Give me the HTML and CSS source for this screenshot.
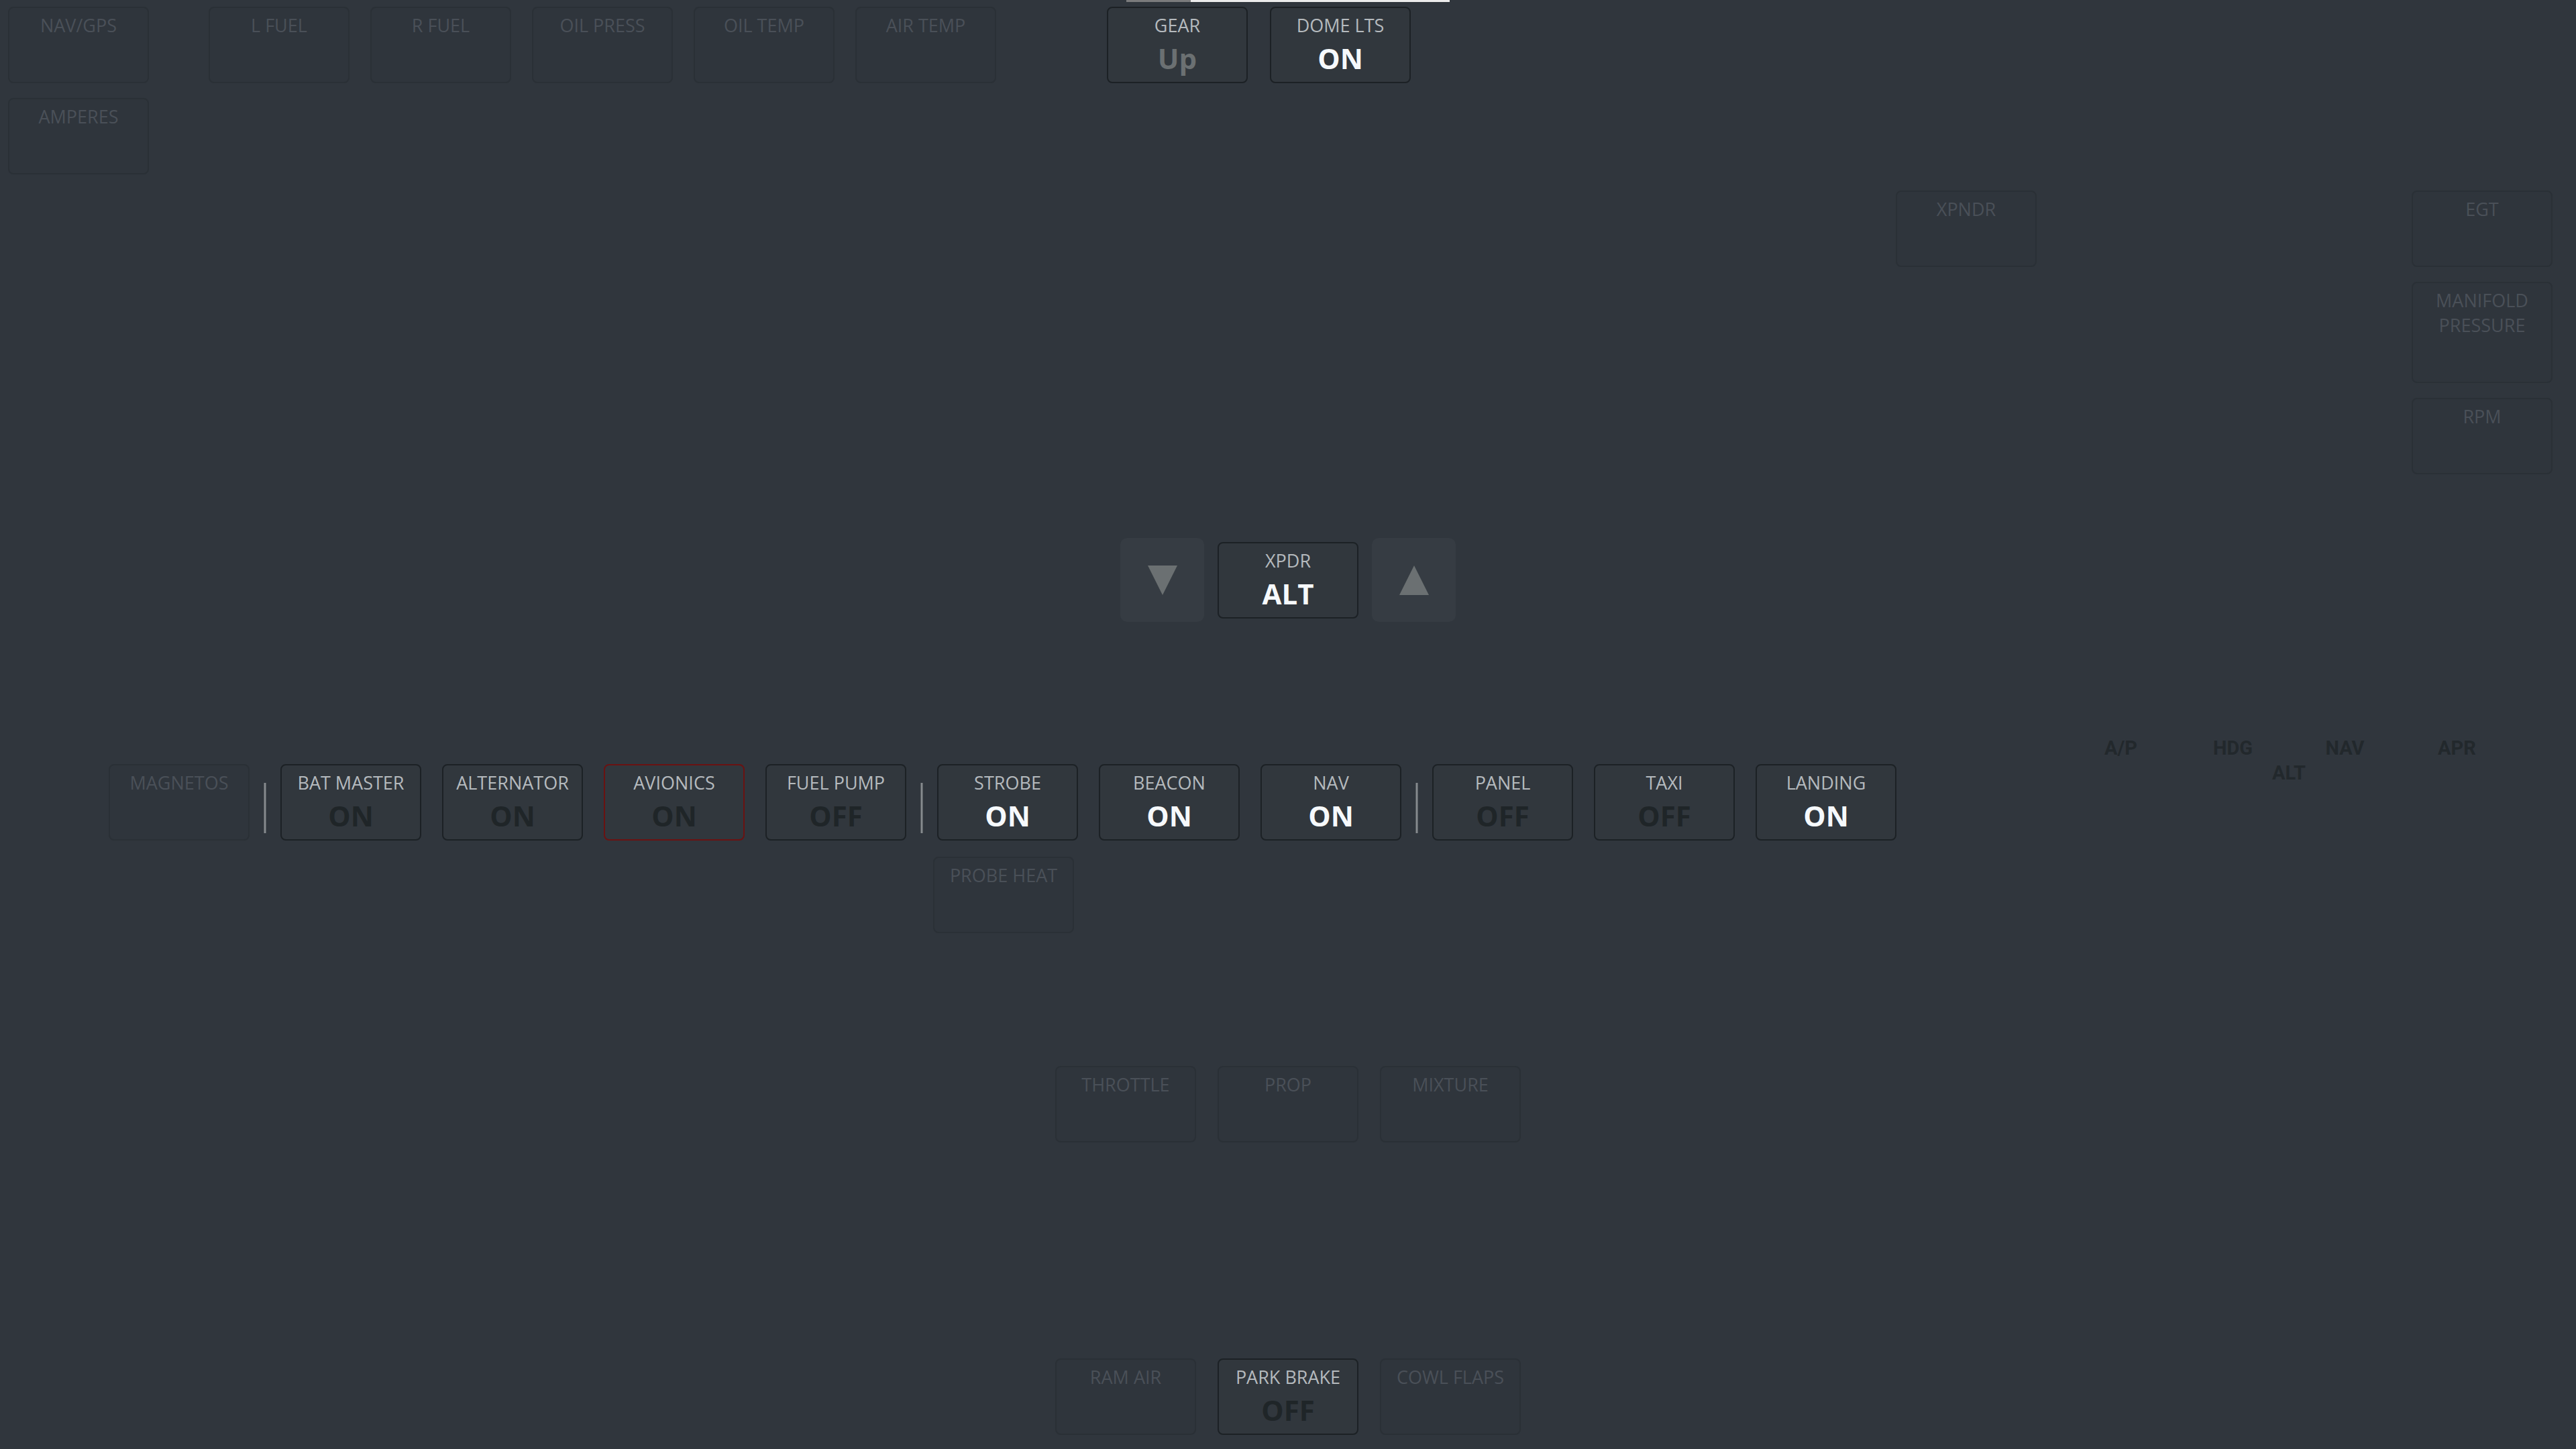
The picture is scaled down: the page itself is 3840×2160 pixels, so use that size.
FILE: index.html
```html
<!DOCTYPE html>
<html lang="en">
<head>
<meta charset="utf-8">
<title>Cockpit Panel</title>
<link rel="stylesheet" href="styles.css">
</head>
<body>
<main class="canvas">
  <div class="topbar"><span class="topbar-fill"></span></div>

  <section class="group g-left-col">
    <div class="btn faded"><span class="lbl">NAV/GPS</span><span class="val">&nbsp;</span></div>
    <div class="btn faded"><span class="lbl">AMPERES</span><span class="val">&nbsp;</span></div>
  </section>

  <section class="group g-gauges">
    <div class="btn faded"><span class="lbl">L FUEL</span><span class="val">&nbsp;</span></div>
    <div class="btn faded"><span class="lbl">R FUEL</span><span class="val">&nbsp;</span></div>
    <div class="btn faded"><span class="lbl">OIL PRESS</span><span class="val">&nbsp;</span></div>
    <div class="btn faded"><span class="lbl">OIL TEMP</span><span class="val">&nbsp;</span></div>
    <div class="btn faded"><span class="lbl">AIR TEMP</span><span class="val">&nbsp;</span></div>
  </section>

  <section class="group g-gear">
    <div class="btn"><span class="lbl">GEAR</span><span class="val gray">Up</span></div>
    <div class="btn"><span class="lbl">DOME LTS</span><span class="val on">ON</span></div>
  </section>

  <section class="group g-xpndr">
    <div class="btn faded"><span class="lbl">XPNDR</span><span class="val">&nbsp;</span></div>
  </section>

  <section class="group g-engine">
    <div class="btn faded"><span class="lbl">EGT</span><span class="val">&nbsp;</span></div>
    <div class="btn faded"><span class="lbl">MANIFOLD<br>PRESSURE</span><span class="val">&nbsp;</span></div>
    <div class="btn faded"><span class="lbl">RPM</span><span class="val">&nbsp;</span></div>
  </section>

  <section class="group g-xpdr">
    <div class="arrow"><svg width="44" height="44" viewBox="0 0 44 44"><polygon points="0,0 44,0 22,44" fill="#6b7072"/></svg></div>
    <div class="btn"><span class="lbl">XPDR</span><span class="val on">ALT</span></div>
    <div class="arrow"><svg width="44" height="44" viewBox="0 0 44 44"><polygon points="22,0 44,44 0,44" fill="#6b7072"/></svg></div>
  </section>

  <section class="group g-switches">
    <div class="btn faded"><span class="lbl">MAGNETOS</span><span class="val">&nbsp;</span></div>
    <span class="sep"></span>
    <div class="btn"><span class="lbl">BAT MASTER</span><span class="val dim">ON</span></div>
    <div class="btn"><span class="lbl">ALTERNATOR</span><span class="val dim">ON</span></div>
    <div class="btn alert"><span class="lbl">AVIONICS</span><span class="val dim">ON</span></div>
    <div class="btn"><span class="lbl">FUEL PUMP</span><span class="val dim">OFF</span></div>
    <span class="sep"></span>
    <div class="btn"><span class="lbl">STROBE</span><span class="val on">ON</span></div>
    <div class="btn"><span class="lbl">BEACON</span><span class="val on">ON</span></div>
    <div class="btn"><span class="lbl">NAV</span><span class="val on">ON</span></div>
    <span class="sep"></span>
    <div class="btn"><span class="lbl">PANEL</span><span class="val dim">OFF</span></div>
    <div class="btn"><span class="lbl">TAXI</span><span class="val dim">OFF</span></div>
    <div class="btn"><span class="lbl">LANDING</span><span class="val on">ON</span></div>
  </section>

  <section class="group g-probe">
    <div class="btn faded"><span class="lbl">PROBE HEAT</span><span class="val">&nbsp;</span></div>
  </section>

  <section class="group g-ap">
    <span class="ap">A/P</span>
    <span class="ap">HDG</span>
    <span class="ap">NAV</span>
    <span class="ap">APR</span>
    <span class="ap ap-alt">ALT</span>
  </section>

  <section class="group g-engine-ctl">
    <div class="btn faded"><span class="lbl">THROTTLE</span><span class="val">&nbsp;</span></div>
    <div class="btn faded"><span class="lbl">PROP</span><span class="val">&nbsp;</span></div>
    <div class="btn faded"><span class="lbl">MIXTURE</span><span class="val">&nbsp;</span></div>
  </section>

  <section class="group g-bottom">
    <div class="btn faded"><span class="lbl">RAM AIR</span><span class="val">&nbsp;</span></div>
    <div class="btn"><span class="lbl">PARK BRAKE</span><span class="val dim">OFF</span></div>
    <div class="btn faded"><span class="lbl">COWL FLAPS</span><span class="val">&nbsp;</span></div>
  </section>
</main>
</body>
</html>
```

FILE: styles.css
```css
* { box-sizing: border-box; }

html, body {
  margin: 0;
  padding: 0;
  background: #30363d;
}

body {
  font-family: "Open Sans", "Noto Sans", sans-serif;
  color: #b5babe;
}

.canvas {
  position: relative;
  width: 3840px;
  height: 2160px;
  overflow: hidden;
  background: #30363d;
}

.topbar {
  position: absolute;
  left: 1679px;
  top: 0;
  width: 482px;
  height: 3px;
  background: #ececec;
  display: flex;
}

.topbar-fill {
  width: 96px;
  height: 100%;
  background: #7a7b7c;
}

.group {
  position: absolute;
  display: flex;
}

.btn {
  width: 210px;
  flex: none;
  border: 2px solid #1c2125;
  border-radius: 8px;
  background: #31373d;
  padding: 7px 4px 7px;
  display: flex;
  flex-direction: column;
  align-items: center;
  text-align: center;
}

.lbl {
  font-size: 27px;
  line-height: 37px;
  color: #b5babe;
  white-space: nowrap;
}

.val {
  margin-top: 2px;
  font-size: 42px;
  line-height: 57px;
  font-weight: 700;
  color: #f5f9fc;
}

.val.on { color: #f6f9fc; }
.val.dim { color: #1f2528; }
.val.gray { color: #6b7072; }

.btn.faded {
  border-color: #2a3036;
  background: #2f353c;
}

.btn.faded .lbl { color: #4a5058; }

.btn.alert { border-color: #6a1212; }

.g-left-col {
  left: 12px;
  top: 10px;
  flex-direction: column;
  gap: 22px;
}

.g-gauges {
  left: 311px;
  top: 10px;
  gap: 31px;
}

.g-gear {
  left: 1650px;
  top: 10px;
  gap: 33px;
}

.g-xpndr {
  left: 2826px;
  top: 284px;
}

.g-engine {
  left: 3595px;
  top: 284px;
  flex-direction: column;
  gap: 22px;
}

.g-xpdr {
  left: 1670px;
  top: 802px;
  gap: 20px;
  align-items: center;
}

.arrow {
  width: 125px;
  height: 125px;
  flex: none;
  border-radius: 10px;
  background: #363c43;
  display: flex;
  align-items: center;
  justify-content: center;
}

.g-switches {
  left: 162px;
  top: 1139px;
  align-items: flex-start;
}

.g-switches .btn + .btn { margin-left: 31px; }

.sep {
  width: 4px;
  height: 75px;
  flex: none;
  margin: 28px 21px 0;
  background: #868b8f;
  border-left: 1px solid #5a5f63;
  border-right: 1px solid #5a5f63;
}

.g-probe {
  left: 1391px;
  top: 1277px;
}

.g-ap {
  left: 3078px;
  top: 1097px;
  width: 668px;
  display: grid;
  grid-template-columns: repeat(4, 167px);
  font-family: Roboto, "Open Sans", sans-serif;
}

.ap {
  font-size: 29px;
  line-height: 37px;
  font-weight: 700;
  color: #22282c;
  text-align: center;
}

.ap-alt {
  grid-column: 1 / -1;
}

.g-engine-ctl {
  left: 1573px;
  top: 1589px;
  gap: 32px;
}

.g-bottom {
  left: 1573px;
  top: 2025px;
  gap: 32px;
}
```
